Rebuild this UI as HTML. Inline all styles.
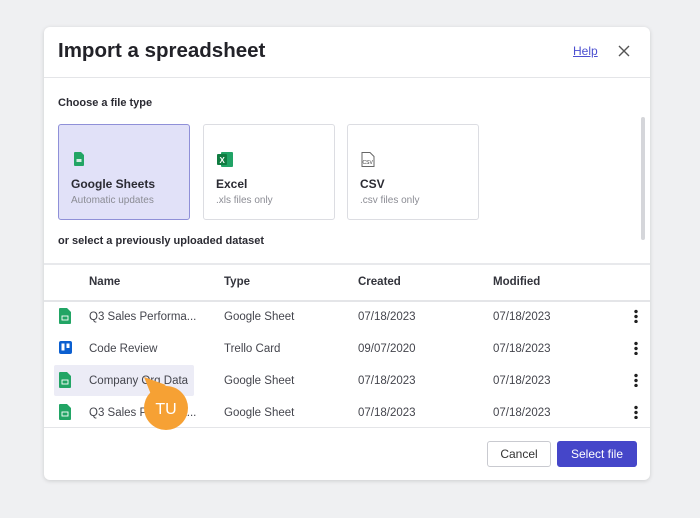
<!DOCTYPE html>
<html><head><style>
*{margin:0;padding:0;box-sizing:border-box}
body{width:700px;height:518px;background:#eff0f2;font-family:"Liberation Sans",sans-serif;position:relative;overflow:hidden;color:#2b2b33}
.modal{position:absolute;left:44px;top:27px;width:606px;height:453px;background:#fff;border-radius:6px;box-shadow:0 1px 4px rgba(0,0,0,.15)}
.abs{position:absolute}
.card{position:absolute;top:97px;width:132px;height:96px;border:1px solid #dcdde2;border-radius:3px;background:#fff}
.card.sel{background:#e1e1f8;border-color:#8f90d8}
.card b{position:absolute;left:12px;top:52px;font-size:12px}
.card span{position:absolute;left:12px;top:70px;font-size:10px;color:#8b8c94}
.th{position:absolute;top:249px;font-size:11.5px;font-weight:bold;color:#33343c}
.td{position:absolute;font-size:11.5px;color:#44454d}
.dots{position:absolute;left:590px;width:4px;height:14px;background:radial-gradient(circle,#222 1.6px,transparent 1.9px) 0 0/4px 5px repeat-y}
</style></head><body>
<div class="modal">
<div class="abs" style="left:14px;top:12px;font-size:20.5px;font-weight:bold;color:#222228">Import a spreadsheet</div>
<div class="abs" style="left:529px;top:17px;font-size:12px;color:#4b4fd0;text-decoration:underline">Help</div>
<svg class="abs" style="left:574px;top:18px" width="12" height="12"><path d="M1 1L11 11M11 1L1 11" stroke="#555" stroke-width="1.4"/></svg>
<div class="abs" style="left:0;top:50px;width:606px;height:1px;background:#e4e5e8"></div>
<div class="abs" style="left:14px;top:70px;font-size:11px;font-weight:bold">Choose a file type</div>
<div class="card sel" style="left:14px"><svg class="abs" style="left:15px;top:27px" width="10" height="14"><path d="M0 1Q0 0 1 0H7L10 3V13Q10 14 9 14H1Q0 14 0 13Z" fill="#22a565"/><rect x="2.5" y="7" width="5" height="3" fill="#fff" opacity=".8"/></svg><b>Google Sheets</b><span>Automatic updates</span></div>
<div class="card" style="left:159px"><svg class="abs" style="left:13px;top:27px" width="16" height="15"><rect x="4" y="0" width="12" height="15" rx="1" fill="#21a366"/><rect x="0" y="2" width="10" height="11" rx="1" fill="#107c41"/><text x="2.5" y="11" font-size="8" fill="#fff" font-family="Liberation Sans" font-weight="bold">X</text></svg><b>Excel</b><span>.xls files only</span></div>
<div class="card" style="left:303px"><svg class="abs" style="left:13px;top:27px" width="14" height="15"><path d="M1 .5H9L13 4.5V14.5H1Z" fill="#fff" stroke="#666"/><text x="1.5" y="12" font-size="5" fill="#333" font-family="Liberation Sans">CSV</text></svg><b>CSV</b><span>.csv files only</span></div>
<div class="abs" style="left:597px;top:90px;width:4px;height:123px;background:#d5d6da;border-radius:2px"></div>
<div class="abs" style="left:14px;top:208px;font-size:11px;font-weight:bold">or select a previously uploaded dataset</div>
<div class="abs" style="left:0;top:236px;width:606px;height:2px;background:#e8e9ec"></div>
<div class="th" style="left:45px">Name</div><div class="th" style="left:180px">Type</div><div class="th" style="left:314px">Created</div><div class="th" style="left:449px">Modified</div>
<div class="abs" style="left:0;top:273px;width:606px;height:2px;background:#e4e5e8"></div>
<div class="abs" style="left:10px;top:338px;width:140px;height:31px;background:#ececf6;border-radius:2px"></div>

<svg class="abs" style="left:15px;top:281px" width="12" height="16"><path d="M0 1Q0 0 1 0H8L12 4V15Q12 16 11 16H1Q0 16 0 15Z" fill="#22a565"/><rect x="3" y="8" width="6" height="4" fill="none" stroke="#fff" stroke-width=".9"/></svg>
<div class="td" style="left:45px;top:284px">Q3 Sales Performa...</div><div class="td" style="left:180px;top:284px">Google Sheet</div><div class="td" style="left:314px;top:284px">07/18/2023</div><div class="td" style="left:449px;top:284px">07/18/2023</div><div class="dots" style="top:282px"></div>

<svg class="abs" style="left:15px;top:314px" width="13" height="13"><rect width="13" height="13" rx="2" fill="#0b5fd0"/><rect x="2.5" y="2.5" width="3" height="7" fill="#fff"/><rect x="7.5" y="2.5" width="3" height="4.5" fill="#fff"/></svg>
<div class="td" style="left:45px;top:316px">Code Review</div><div class="td" style="left:180px;top:316px">Trello Card</div><div class="td" style="left:314px;top:316px">09/07/2020</div><div class="td" style="left:449px;top:316px">07/18/2023</div><div class="dots" style="top:314px"></div>

<svg class="abs" style="left:15px;top:345px" width="12" height="16"><path d="M0 1Q0 0 1 0H8L12 4V15Q12 16 11 16H1Q0 16 0 15Z" fill="#22a565"/><rect x="3" y="8" width="6" height="4" fill="none" stroke="#fff" stroke-width=".9"/></svg>
<div class="td" style="left:45px;top:348px">Company Org Data</div><div class="td" style="left:180px;top:348px">Google Sheet</div><div class="td" style="left:314px;top:348px">07/18/2023</div><div class="td" style="left:449px;top:348px">07/18/2023</div><div class="dots" style="top:346px"></div>

<svg class="abs" style="left:15px;top:377px" width="12" height="16"><path d="M0 1Q0 0 1 0H8L12 4V15Q12 16 11 16H1Q0 16 0 15Z" fill="#22a565"/><rect x="3" y="8" width="6" height="4" fill="none" stroke="#fff" stroke-width=".9"/></svg>
<div class="td" style="left:45px;top:380px">Q3 Sales Performa...</div><div class="td" style="left:180px;top:380px">Google Sheet</div><div class="td" style="left:314px;top:380px">07/18/2023</div><div class="td" style="left:449px;top:380px">07/18/2023</div><div class="dots" style="top:378px"></div>

<div class="abs" style="left:0;top:400px;width:606px;height:1px;background:#e4e5e8"></div>
<div class="abs" style="left:443px;top:414px;width:64px;height:26px;border:1px solid #c9cad0;border-radius:3px;font-size:12px;text-align:center;line-height:24px;color:#333">Cancel</div>
<div class="abs" style="left:513px;top:414px;width:80px;height:26px;background:#4546c9;border-radius:3px;font-size:12px;text-align:center;line-height:26px;color:#fff">Select file</div>

<svg class="abs" style="left:96px;top:346px" width="56" height="58"><path d="M4 4L26 12L12 24Z" fill="#f6a134"/><circle cx="26" cy="35" r="22" fill="#f6a134"/><text x="26" y="41" text-anchor="middle" font-size="16" fill="#fff" font-family="Liberation Sans">TU</text></svg>
</div>
</body></html>
